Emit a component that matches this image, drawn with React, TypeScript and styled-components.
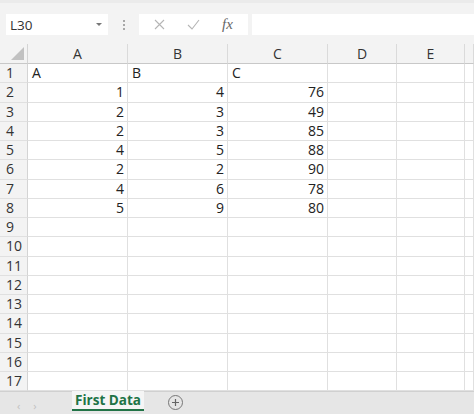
import React from 'react';
import styled, { createGlobalStyle } from 'styled-components';

const GlobalStyle = createGlobalStyle`
  html, body {
    margin: 0;
    padding: 0;
    background: #ffffff;
    overflow: hidden;
  }
  body {
    font-family: "Open Sans", "Noto Sans", "Liberation Sans", sans-serif;
  }
`;

const Window = styled.div`
  width: 474px;
  height: 414px;
  display: flex;
  flex-direction: column;
  background: #fff;
  overflow: hidden;
`;

const FormulaBar = styled.div`
  height: 44px;
  flex: none;
  display: flex;
  align-items: center;
  padding: 2px 0 0 6px;
  background: #f3f3f3;
  border-top: 3px solid #ebebeb;
  box-sizing: border-box;
`;

const NameBox = styled.div`
  width: 102px;
  height: 21px;
  background: #fff;
  display: flex;
  align-items: center;
  justify-content: space-between;
  padding: 0 6px 0 4px;
  box-sizing: border-box;
  font-size: 13.5px;
  color: #333;
`;

const Caret = styled.span`
  width: 0;
  height: 0;
  border-left: 3px solid transparent;
  border-right: 3px solid transparent;
  border-top: 3px solid #777;
`;

const Grip = styled.div`
  width: 31px;
  display: flex;
  flex-direction: column;
  align-items: center;
  gap: 2px;
  span {
    width: 2px;
    height: 2px;
    background: #a8a8a8;
  }
`;

const Buttons = styled.div`
  width: 109px;
  height: 21px;
  background: #fff;
  display: flex;
  align-items: center;
  justify-content: space-around;
  padding: 0 4px;
  box-sizing: border-box;
  margin-right: 4px;
`;

const Fx = styled.span`
  font-family: "Liberation Serif", serif;
  font-style: italic;
  font-size: 15px;
  color: #666;
`;

const Input = styled.div`
  flex: 1;
  height: 21px;
  background: #fff;
`;

const Sheet = styled.div`
  flex: none;
  display: grid;
  grid-template-columns: 28px 100px 100px 100px 69px 68px 1fr;
  grid-template-rows: 20px repeat(17, 19.25px);
  font-size: 14px;
  color: #222;
`;

const Corner = styled.div`
  background: #f3f3f3;
  border-bottom: 1px solid #c8c8c8;
  border-right: 1px solid #d4d4d4;
  position: relative;
  &::after {
    content: '';
    position: absolute;
    right: 3px;
    bottom: 3px;
    width: 0;
    height: 0;
    border-left: 13px solid transparent;
    border-bottom: 13px solid #c1c1c1;
  }
`;

const ColHead = styled.div`
  background: #f3f3f3;
  border-bottom: 1px solid #c8c8c8;
  border-right: 1px solid #dadada;
  display: flex;
  align-items: center;
  justify-content: center;
  color: #333;
  line-height: 1;
`;

const RowHead = styled.div`
  background: #f3f3f3;
  border-bottom: 1px solid #e0e0e0;
  border-right: 1px solid #d4d4d4;
  display: flex;
  align-items: center;
  padding-left: 6px;
  color: #333;
  line-height: 1;
`;

const Cell = styled.div<{ $num?: boolean }>`
  border-bottom: 1px solid #e0e0e0;
  border-right: 1px solid #e0e0e0;
  display: flex;
  align-items: center;
  justify-content: ${(p) => (p.$num ? 'flex-end' : 'flex-start')};
  padding: 0 3px 0 4px;
  line-height: 1;
  white-space: nowrap;
`;

const TabBar = styled.div`
  flex: 1;
  display: flex;
  align-items: flex-start;
  background: #e6e6e6;
  border-top: 1px solid #d0d0d0;
`;

const Nav = styled.div`
  width: 72px;
  display: flex;
  gap: 13px;
  padding: 6px 0 0 17px;
  box-sizing: border-box;
  font-size: 11px;
  color: #c0c0c0;
`;

const Tab = styled.div`
  width: 72px;
  height: 20px;
  background: #f5f5f5;
  display: flex;
  align-items: center;
  justify-content: center;
  font-weight: 700;
  font-size: 13.5px;
  color: #217346;
  border-bottom: 2px solid #217346;
  box-sizing: border-box;
  margin-top: -1px;
`;

const AddSheet = styled.div`
  margin: 3px 0 0 24px;
  width: 15px;
  height: 15px;
  border: 1px solid #777;
  border-radius: 50%;
  display: flex;
  align-items: center;
  justify-content: center;
  box-sizing: border-box;
`;

const data: [string, string, string][] = [
  ['A', 'B', 'C'],
  ['1', '4', '76'],
  ['2', '3', '49'],
  ['2', '3', '85'],
  ['4', '5', '88'],
  ['2', '2', '90'],
  ['4', '6', '78'],
  ['5', '9', '80'],
];

const columns = ['A', 'B', 'C', 'D', 'E', ''];

export default function App() {
  const rows = Array.from({ length: 17 }, (_, i) => i + 1);

  return (
    <Window>
      <GlobalStyle />
      <FormulaBar>
        <NameBox>
          L30
          <Caret />
        </NameBox>
        <Grip>
          <span />
          <span />
          <span />
        </Grip>
        <Buttons>
          <svg width="11" height="11" viewBox="0 0 11 11">
            <path d="M1 1 L10 10 M10 1 L1 10" stroke="#b5b5b5" strokeWidth="1.1" />
          </svg>
          <svg width="13" height="11" viewBox="0 0 13 11">
            <path d="M1 6 L5 10 L12 1" stroke="#b5b5b5" strokeWidth="1.1" fill="none" />
          </svg>
          <Fx>fx</Fx>
        </Buttons>
        <Input />
      </FormulaBar>

      <Sheet>
        <Corner />
        {columns.map((c, i) => (
          <ColHead key={i}>{c}</ColHead>
        ))}
        {rows.map((r) => {
          const row = data[r - 1];
          return (
            <React.Fragment key={r}>
              <RowHead>{r}</RowHead>
              {columns.map((_, ci) => {
                const val = row && ci < 3 ? row[ci] : '';
                return (
                  <Cell key={ci} $num={r > 1}>
                    {val}
                  </Cell>
                );
              })}
            </React.Fragment>
          );
        })}
      </Sheet>

      <TabBar>
        <Nav>
          <span>‹</span>
          <span>›</span>
        </Nav>
        <Tab>First Data</Tab>
        <AddSheet>
          <svg width="9" height="9" viewBox="0 0 9 9">
            <path d="M4.5 1 V8 M1 4.5 H8" stroke="#666" strokeWidth="1.2" />
          </svg>
        </AddSheet>
      </TabBar>
    </Window>
  );
}
